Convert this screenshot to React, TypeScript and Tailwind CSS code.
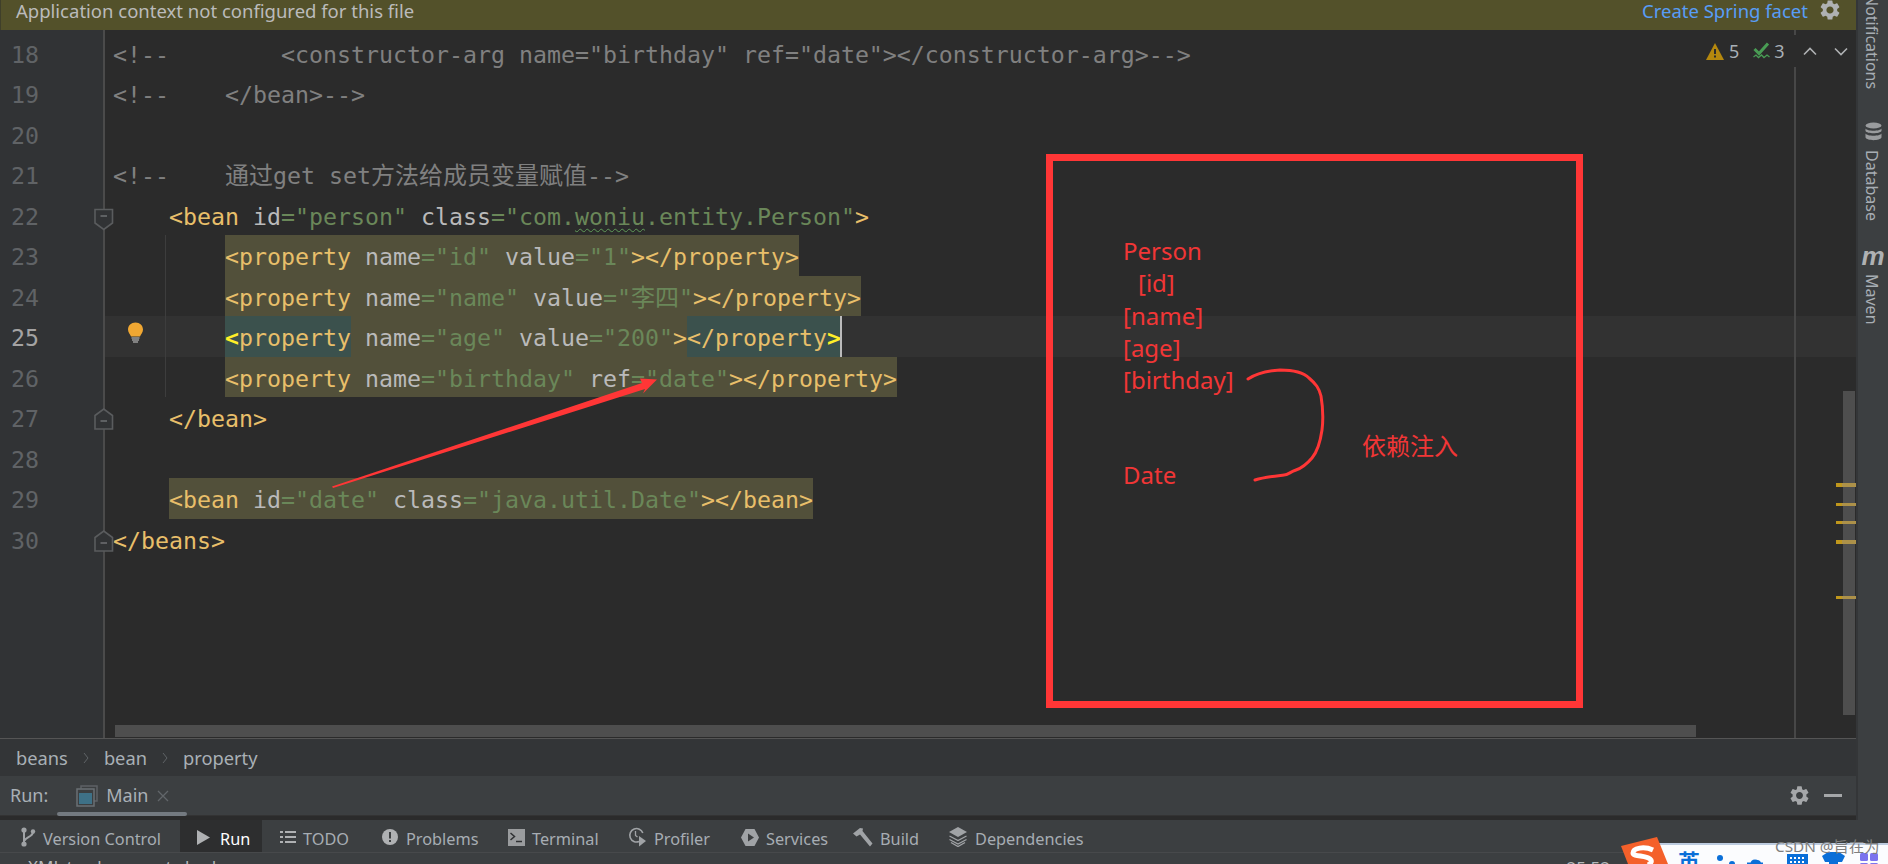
import React from "react";
import { MdSettings } from "react-icons/md";

const T = ({ children }: { children: React.ReactNode }) => <span className="text-[#e8bf6a]">{children}</span>;
const A = ({ children }: { children: React.ReactNode }) => <span className="text-[#bababa]">{children}</span>;
const S = ({ children }: { children: React.ReactNode }) => <span className="text-[#6a8759]">{children}</span>;
const Cn = ({ children }: { children: React.ReactNode }) => <span className="text-[24px]">{children}</span>;
const Hl = ({ children }: { children: React.ReactNode }) => <span className="inline-block h-[40.5px] bg-[#52503a] align-top">{children}</span>;
const Match = ({ children }: { children: React.ReactNode }) => <span className="inline-block h-[40.5px] bg-[#3b514d] align-top">{children}</span>;
const Y = ({ children }: { children: React.ReactNode }) => <span className="font-bold text-[#ffef28]">{children}</span>;

const Row = ({ children, current }: { children?: React.ReactNode; current?: boolean }) => (
  <div className={current ? "h-[40.5px] whitespace-pre pl-[8px] bg-[#323232]" : "h-[40.5px] whitespace-pre pl-[8px]"}>{children}</div>
);

const FoldDown = () => (
  <svg className="absolute left-[94px] top-[13px]" width="20" height="23" viewBox="0 0 20 23">
    <path d="M1 1.5H18.5V15L9.75 21.5L1 15Z" fill="#313335" stroke="#5a5c5e" strokeWidth="1.6" />
    <path d="M6.5 8H13" stroke="#6b6d70" strokeWidth="1.6" />
  </svg>
);
const FoldUp = () => (
  <svg className="absolute left-[94px] top-[11px]" width="20" height="23" viewBox="0 0 20 23">
    <path d="M1 21H18.5V7.5L9.75 1L1 7.5Z" fill="#313335" stroke="#5a5c5e" strokeWidth="1.6" />
    <path d="M6.5 13H13" stroke="#6b6d70" strokeWidth="1.6" />
  </svg>
);

const gutterNumbers = [18, 19, 20, 21, 22, 23, 24, 25, 26, 27, 28, 29, 30];

const markClasses = [
  "absolute left-[1731px] top-[453px] h-[4px] w-[20px] bg-[#ad9149]",
  "absolute left-[1731px] top-[473px] h-[3px] w-[20px] bg-[#ad9149]",
  "absolute left-[1731px] top-[491px] h-[3px] w-[20px] bg-[#ad9149]",
  "absolute left-[1731px] top-[510px] h-[4px] w-[20px] bg-[#ad9149]",
  "absolute left-[1731px] top-[566px] h-[3px] w-[20px] bg-[#ad9149]",
];

const Tab = ({ className, icon, label, active }: { className: string; icon: React.ReactNode; label: string; active?: boolean }) => (
  <div className={className}>
    <span className="mt-[2px] flex">{icon}</span>
    <span className={active ? "mt-[6px] leading-[24px] text-white" : "mt-[6px] leading-[24px] text-[#a7adb3]"}>{label}</span>
  </div>
);

export default function App() {
  return (
    <div className="relative flex h-[864px] w-[1888px] flex-col overflow-hidden bg-[#3c3f41] [font-family:'Noto_Sans','Noto_Sans_CJK_SC',sans-serif]">
      <div className="flex h-[820px]">
        {/* main column */}
        <div className="flex w-[1856px] flex-col">
          {/* banner */}
          <div className="flex h-[30px] justify-between border-l border-[#3f3f2a] bg-[#53512a] pl-[15px] pr-[16px] text-[18.5px] leading-[21px] text-[#bbbbbb]">
            <span>Application context not configured for this file</span>
            <div className="flex items-start gap-[10px]">
              <span className="text-[#589df6]">Create Spring facet</span>
              <MdSettings className="-mr-[2px] -mt-[2px] text-[#afb1b3]" size={24} />
            </div>
          </div>

          {/* editor */}
          <div className="relative flex h-[708px] text-[23.25px] leading-[44.5px] [font-family:'DejaVu_Sans_Mono','Noto_Sans_CJK_SC',monospace]">
            <div className="relative z-10 w-[103px] bg-[#313335] pt-[2.5px] pl-[11px] text-[#606366]">
              {gutterNumbers.map((n) => (
                <div key={n} className={n === 25 ? "relative h-[40.5px] text-[#a4a3a3]" : "relative h-[40.5px]"}>
                  {n}
                </div>
              ))}
              <div className="absolute left-0 top-[2.5px] h-[526px] w-full">
                <div className="relative mt-[162px] h-[40.5px]"><FoldDown /></div>
                <div className="relative mt-[162px] h-[40.5px]"><FoldUp /></div>
                <div className="relative mt-[81px] h-[40.5px]"><FoldUp /></div>
              </div>
            </div>
            <div className="relative flex-1 border-l-2 border-[#4b4b4b] bg-[#2b2b2b] pt-[2.5px] text-[#808080]">
              <div className="absolute left-[60px] top-[205px] h-[162px] w-[1px] bg-[#3d3d3d]" />
              <Row>{"<!--        <constructor-arg name=\"birthday\" ref=\"date\"></constructor-arg>-->"}</Row>
              <Row>{"<!--    </bean>-->"}</Row>
              <Row />
              <Row>
                {"<!--    "}<Cn>通过</Cn>{"get set"}<Cn>方法给成员变量赋值</Cn>{"-->"}
              </Row>
              <Row>
                {"    "}<T>{"<bean "}</T><A>id</A><S>{"=\"person\" "}</S><A>class</A>
                <S>{"=\"com."}<span className="underline decoration-wavy decoration-[#5f9a58] decoration-1 underline-offset-[3px]">woniu</span>{".entity.Person\""}</S><T>{">"}</T>
              </Row>
              <Row>
                {"        "}<Hl><T>{"<property "}</T><A>name</A><S>{"=\"id\" "}</S><A>value</A><S>{"=\"1\""}</S><T>{"></property>"}</T></Hl>
              </Row>
              <Row>
                {"        "}<Hl><T>{"<property "}</T><A>name</A><S>{"=\"name\" "}</S><A>value</A><S>{"=\""}<Cn>李四</Cn>{"\""}</S><T>{"></property>"}</T></Hl>
              </Row>
              <Row current>
                {"        "}
                <Hl>
                  <Match><Y>{"<"}</Y><T>property</T></Match><T>{" "}</T><A>name</A><S>{"=\"age\" "}</S><A>value</A><S>{"=\"200\""}</S><T>{">"}</T>
                  <Match><T>{"</property"}</T><Y>{">"}</Y></Match>
                </Hl>
                <span className="-ml-[1px] inline-block h-[40.5px] w-[2px] bg-[#bbbbbb] align-top" />
              </Row>
              <Row>
                {"        "}<Hl><T>{"<property "}</T><A>name</A><S>{"=\"birthday\" "}</S><A>ref</A><S>{"=\"date\""}</S><T>{"></property>"}</T></Hl>
              </Row>
              <Row>{"    "}<T>{"</bean>"}</T></Row>
              <Row />
              <Row>
                {"    "}<Hl><T>{"<bean "}</T><A>id</A><S>{"=\"date\" "}</S><A>class</A><S>{"=\"java.util.Date\""}</S><T>{"></bean>"}</T></Hl>
              </Row>
              <Row><T>{"</beans>"}</T></Row>

              {/* lightbulb */}
              <svg className="absolute left-[22px] top-[292px]" width="17" height="22" viewBox="0 0 17 22">
                <path d="M8.5 0.5C4.2 0.5 1 3.6 1 7.6C1 10.6 3 12.2 4 14.5H13C14 12.2 16 10.6 16 7.6C16 3.6 12.8 0.5 8.5 0.5Z" fill="#f0a732" />
                <path d="M4.5 16H12.5M5 18H12M6 20H11" stroke="#9a9a9a" strokeWidth="1.4" />
              </svg>

              {/* right margin */}
              <div className="absolute left-[1689px] top-0 h-full w-[2px] bg-[#474747]" />

              {/* inspection widget */}
              <div className="absolute right-0 top-[5px] flex h-[32px] w-[154px] items-center bg-[#2b2b2b] pl-[4px] text-[18px] leading-none text-[#a9b0b6] [font-family:'Noto_Sans',sans-serif]">
                <svg width="18" height="17" viewBox="0 0 18 17">
                  <path d="M9 0L18 17H0Z" fill="#b5880e" />
                  <path d="M8 6H10V11H8ZM8 12.5H10V14.5H8Z" fill="#2b2b2b" />
                </svg>
                <span className="ml-[5px]">5</span>
                <svg className="ml-[14px]" width="17" height="18" viewBox="0 0 17 18">
                  <path d="M1.5 7L6 11.5L15 1.5" fill="none" stroke="#499c54" strokeWidth="3" />
                  <path d="M0.5 15L3 13L5.5 15.5L8.5 13L11 15.5L14 13L16.5 15" fill="none" stroke="#499c54" strokeWidth="1.3" />
                </svg>
                <span className="ml-[4px]">3</span>
                <svg className="ml-[18px]" width="14" height="9" viewBox="0 0 14 9">
                  <path d="M1 7.5L7 1.5L13 7.5" fill="none" stroke="#afb1b3" strokeWidth="1.6" />
                </svg>
                <svg className="ml-[17px]" width="14" height="9" viewBox="0 0 14 9">
                  <path d="M1 1.5L7 7.5L13 1.5" fill="none" stroke="#afb1b3" strokeWidth="1.6" />
                </svg>
              </div>

              {/* scrollbars */}
              <div className="absolute bottom-[1px] left-[10px] h-[12px] w-[1581px] bg-[#4e4e4e]" />
              <div className="absolute left-[1738px] top-[361px] h-[324px] w-[12px] bg-[#4e4e4e]" />
              {markClasses.map((c) => (
                <div key={c} className={c}>
                  <div className="h-full w-[6px] bg-[#c0971c]" />
                </div>
              ))}
            </div>
          </div>

          <div className="h-[1px] bg-[#555555]" />

          {/* breadcrumb */}
          <div className="flex h-[37px] items-center bg-[#333537] pl-[16px] text-[18.3px] text-[#a9b0b6]">
            <span>beans</span>
            <svg className="mx-[15px]" width="6" height="12" viewBox="0 0 6 12"><path d="M1 1L5 6L1 11" fill="none" stroke="#5f6366" /></svg>
            <span>bean</span>
            <svg className="mx-[15px]" width="6" height="12" viewBox="0 0 6 12"><path d="M1 1L5 6L1 11" fill="none" stroke="#5f6366" /></svg>
            <span>property</span>
          </div>

          {/* run bar */}
          <div className="flex h-[39px] items-center bg-[#3c3f41] pl-[10px] pr-[14px] text-[18px] text-[#a9b0b6]">
            <span>Run:</span>
            <div className="relative ml-[9px] flex h-full w-[130px] items-center pl-[19px]">
              <svg width="22" height="22" viewBox="0 0 22 22">
                <path d="M5 3.5V1H21V16H18" fill="none" stroke="#5d6265" strokeWidth="1.5" />
                <rect x="1" y="4" width="17" height="17" fill="#3c3f41" stroke="#6a7074" strokeWidth="1.5" />
                <rect x="3" y="8" width="13" height="11" fill="#3e7187" />
              </svg>
              <span className="ml-[8px]">Main</span>
              <svg className="ml-[9px]" width="12" height="12" viewBox="0 0 12 12"><path d="M1 1L11 11M11 1L1 11" stroke="#62666a" strokeWidth="1.3" /></svg>
              <div className="absolute bottom-[-1px] left-0 h-[4px] w-full rounded-[2px] bg-[#747a80]" />
            </div>
            <div className="flex-1" />
            <MdSettings className="text-[#a5a7a9]" size={23} />
            <div className="ml-[13px] h-[3px] w-[18px] bg-[#a5a7a9]" />
          </div>

          <div className="h-[5px] border-t border-[#333333] bg-[#2b2b2b]" />
        </div>

        {/* right stripe */}
        <div className="flex w-[32px] flex-col items-center border-l-2 border-[#343638] text-[16px] leading-none text-[#a7adb3]">
          <span className="-ml-[3px] -mt-[6px] [writing-mode:vertical-rl]">Notifications</span>
          <svg className="mt-[33px]" width="17" height="19" viewBox="0 0 17 19">
            <ellipse cx="8.5" cy="3.5" rx="8" ry="3" fill="#9a9c9e" />
            <path d="M0.5 6.5C2 9.5 15 9.5 16.5 6.5V9C15 12 2 12 0.5 9Z" fill="#9a9c9e" />
            <path d="M0.5 11.5C2 14.5 15 14.5 16.5 11.5V15.5C15 19 2 19 0.5 15.5Z" fill="#9a9c9e" />
          </svg>
          <span className="-ml-[3px] mt-[9px] [writing-mode:vertical-rl]">Database</span>
          <span className="mt-[26px] text-[26px] font-bold italic leading-[18px] text-[#afb1b3] [font-family:'Liberation_Sans',sans-serif]">m</span>
          <span className="-ml-[3px] mt-[9px] [writing-mode:vertical-rl]">Maven</span>
        </div>
      </div>

      {/* tool window tabs */}
      <div className="flex h-[33px] items-stretch border-b border-[#47494b] text-[16.3px]">
        <Tab className="flex w-[180px] items-center gap-[7px] pl-[20px]" label="Version Control" icon={
          <svg width="16" height="20" viewBox="0 0 16 20"><g fill="#a0a3a6"><circle cx="4" cy="3" r="2.6" /><circle cx="4" cy="17" r="2.6" /><circle cx="13" cy="4.5" r="2.2" /><path d="M3 3H5V17H3Z" /></g><path d="M13 5C13 10 5 10 4.5 14" fill="none" stroke="#a0a3a6" strokeWidth="2" /></svg>
        } />
        <Tab active className="flex w-[82px] items-center gap-[10px] bg-[#2d2e2f] pl-[17px]" label="Run" icon={
          <svg width="13" height="15" viewBox="0 0 13 15"><path d="M0 0L13 7.5L0 15Z" fill="#afb1b3" /></svg>
        } />
        <Tab className="flex w-[101px] items-center gap-[7px] pl-[18px]" label="TODO" icon={
          <svg width="16" height="14" viewBox="0 0 16 14"><path d="M0 1H3V3H0ZM5 1H16V3H5ZM0 6H3V8H0ZM5 6H16V8H5ZM0 11H3V13H0ZM5 11H16V13H5Z" fill="#afb1b3" /></svg>
        } />
        <Tab className="flex w-[127px] items-center gap-[8px] pl-[19px]" label="Problems" icon={
          <svg width="16" height="16" viewBox="0 0 16 16"><circle cx="8" cy="8" r="8" fill="#afb1b3" /><path d="M7 3H9V9.5H7ZM7 11H9V13H7Z" fill="#3c3f41" /></svg>
        } />
        <Tab className="flex w-[120px] items-center gap-[7px] pl-[18px]" label="Terminal" icon={
          <svg width="17" height="17" viewBox="0 0 17 17"><rect width="17" height="17" fill="#9a9c9e" /><path d="M2.5 4L6.5 7.5L2.5 11" fill="none" stroke="#2f3133" strokeWidth="1.5" /><path d="M8 12.5H14" stroke="#2f3133" strokeWidth="1.5" /></svg>
        } />
        <Tab className="flex w-[113px] items-center gap-[8px] pl-[18px]" label="Profiler" icon={
          <svg width="18" height="20" viewBox="0 0 18 20"><path d="M11 14.5A6.7 6.7 0 1 1 14.8 6" fill="none" stroke="#a0a3a6" strokeWidth="1.6" /><path d="M7.5 4V8.5L9.5 10" fill="none" stroke="#a0a3a6" strokeWidth="1.3" /><path d="M11 9L18 14L11 19.5Z" fill="#a0a3a6" /></svg>
        } />
        <Tab className="flex w-[112px] items-center gap-[7px] pl-[18px]" label="Services" icon={
          <svg width="18" height="17" viewBox="0 0 18 17"><path d="M4.5 0H13.5L18 8.5L13.5 17H4.5L0 8.5Z" fill="#a0a3a6" /><path d="M7 4.5L13 8.5L7 12.5Z" fill="#3c3f41" /></svg>
        } />
        <Tab className="flex w-[95px] items-center gap-[7px] pl-[18px]" label="Build" icon={
          <svg width="20" height="19" viewBox="0 0 20 19"><path d="M0 5.5L7 0L10 0.5L9.5 3L19.5 15.5L17 18.5L7 6.5L3.5 8.5Z" fill="#a0a3a6" /></svg>
        } />
        <Tab className="flex flex-1 items-center gap-[7px] pl-[18px]" label="Dependencies" icon={
          <svg width="20" height="20" viewBox="0 0 20 20"><path d="M10 0L19 5L10 10L1 5Z" fill="#a0a3a6" /><path d="M1.5 9L10 13.5L18.5 9M1.5 12.5L10 17L18.5 12.5M3 15.5L10 19.5L17 15.5" fill="none" stroke="#a0a3a6" strokeWidth="1.3" /></svg>
        } />
      </div>

      {/* status bar, cropped by the window edge */}
      <div className="flex h-[11px] items-start overflow-hidden pl-[28px] pr-[278px] text-[17px] leading-[22px] text-[#b4b8bb]">
        <span className="mt-[3px]">XML tag has empty body</span>
        <span className="ml-auto mt-[4px]">25:52</span>
      </div>

      {/* Sogou IME bar */}
      <div className="absolute bottom-0 left-[1658px] h-[21px] w-[230px] overflow-hidden border-t-2 border-[#bccbdf] bg-[#fbfcfe]">
        <span className="absolute left-[20px] top-[2px] text-[22px] font-bold leading-[26px] text-[#0a6fd8] [font-family:'Noto_Sans_CJK_SC',sans-serif]">英</span>
      </div>
      <svg className="absolute left-[1620px] top-[836px]" width="268" height="28" viewBox="0 0 268 28">
        <path d="M1 10L37 1L48 28H8Z" fill="#f4602a" />
        <path d="M33 14C24 10 13 12 13 17C13 21 28 19 31 24C32 26 30 28 28 29" fill="none" stroke="#ffffff" strokeWidth="5" />
        <circle cx="100" cy="22" r="3" fill="#0a6fd8" />
        <circle cx="112" cy="28" r="3" fill="#0a6fd8" />
        <path d="M132 30V28C132 24 138 24 138 28V30Z M127 28H143" fill="#0a6fd8" stroke="#0a6fd8" strokeWidth="3" />
        <rect x="133" y="24" width="8" height="10" rx="4" fill="#0a6fd8" />
        <path d="M167 18H188V30H167Z" fill="#0a6fd8" />
        <path d="M170 22H172M174 22H176M178 22H180M182 22H184M170 26H172M174 26H176M178 26H180M182 26H184" stroke="#ffffff" strokeWidth="2" />
        <path d="M202 20L208 16H219L225 20L222 26H218V30H209V26H205Z" fill="#0a6fd8" />
        <rect x="240" y="17" width="8" height="8" rx="1.5" fill="#7b73ee" />
        <rect x="250" y="17" width="8" height="8" rx="1.5" fill="#7b73ee" />
        <rect x="240" y="27" width="8" height="8" rx="1.5" fill="#7b73ee" />
        <rect x="250" y="27" width="8" height="8" rx="1.5" fill="#7b73ee" />
      </svg>
      <span className="absolute left-[1775px] top-[835px] whitespace-nowrap text-[15.3px] leading-[23px] text-[#7f7f7f]">CSDN @旨在为</span>

      {/* red annotations */}
      <svg className="absolute left-0 top-0" width="1888" height="864" viewBox="0 0 1888 864" fill="none">
        <path d="M332 486.5L642 383L640 378.5L657 379.5L643 393.5L645 389L333 488Z" fill="#ff3636" />
        <path d="M1248 379C1254 375 1262 371 1280 370C1292 370 1303 372 1309 378C1316 384 1319 388 1321 396C1323 408 1323 422 1322 430C1320 444 1317 452 1312 458C1306 465 1302 468 1296 470C1290 472 1288 475 1284 475C1276 476 1265 477 1255 480" stroke="#ff3636" strokeWidth="3" strokeLinecap="round" />
      </svg>
      <div className="absolute left-[1046px] top-[154px] h-[554px] w-[537px] border-[7px] border-[#ff3636] pl-[70px] pt-[74px] text-[24px] leading-[32.25px] text-[#f13636]">
        <div>Person</div>
        <div className="pl-[15px]">[id]</div>
        <div>[name]</div>
        <div>[age]</div>
        <div>[birthday]</div>
        <div className="mt-[62.5px]">Date</div>
        <span className="absolute left-[309px] top-[269px] text-[24px]">依赖注入</span>
      </div>
    </div>
  );
}
